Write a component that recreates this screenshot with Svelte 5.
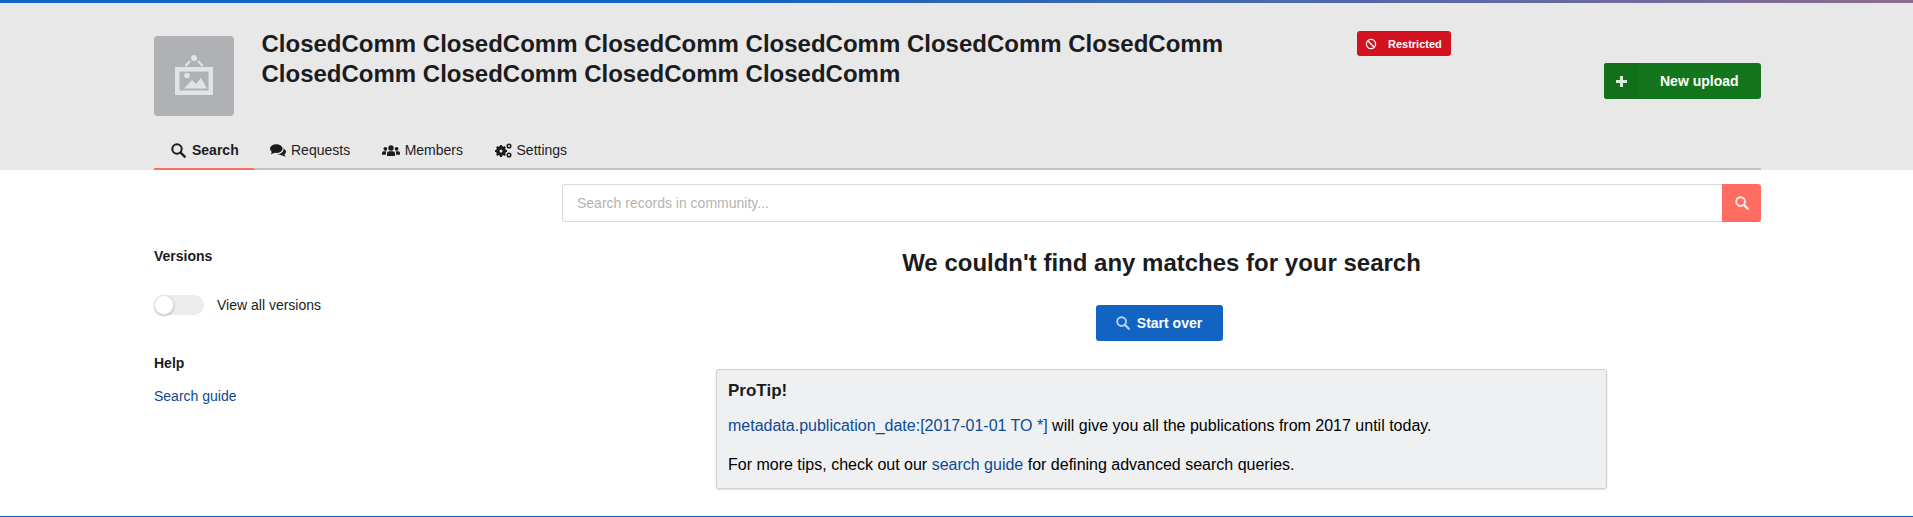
<script lang="ts">
  const tabs = [
    { label: 'Search', icon: 'search', active: true },
    { label: 'Requests', icon: 'comments', active: false },
    { label: 'Members', icon: 'users', active: false },
    { label: 'Settings', icon: 'cogs', active: false },
  ];
  const title = Array(10).fill('ClosedComm').join(' ');
</script>

{#snippet searchIcon(size)}
  <svg class="ico" width={size} height={size} viewBox="0 0 15 15" aria-hidden="true">
    <circle cx="6" cy="6" r="4.700" fill="none" stroke="currentColor" stroke-width="2" />
    <path d="M9.500 9.500 13.700 13.700" stroke="currentColor" stroke-width="2.400" stroke-linecap="round" />
  </svg>
{/snippet}

<div class="topline"></div>

<header class="head">
  <div class="wrap">
    <div class="head-row">
      <div class="logo">
        <svg width="38" height="40" viewBox="0 0 38 40" aria-hidden="true">
          <circle cx="19" cy="3" r="3" fill="#e2e3e4" />
          <path d="M10.500 11 15 6M27.500 11 23 6" stroke="#e2e3e4" stroke-width="2" />
          <path fill-rule="evenodd" d="M0 12H38V40H0ZM4.500 16.500V35.500H33.500V16.500Z" fill="#e2e3e4" />
          <circle cx="12" cy="20.500" r="2.800" fill="#e2e3e4" />
          <path d="M9 33.500 17 25 21 29 26 23 32 33.500Z" fill="#e2e3e4" />
        </svg>
      </div>
      <h1>{title}</h1>
      <span class="badge">
        <svg width="12" height="12" viewBox="0 0 12 12" aria-hidden="true">
          <circle cx="6" cy="6" r="4.600" fill="none" stroke="currentColor" stroke-width="1.300" />
          <path d="M2.800 2.800 9.200 9.200" stroke="currentColor" stroke-width="1.300" />
        </svg>
        Restricted
      </span>
      <button class="upload">
        <span class="plus">
          <svg width="13" height="13" viewBox="0 0 13 13" aria-hidden="true">
            <path d="M6.500 1V12M1 6.500H12" stroke="currentColor" stroke-width="3" />
          </svg>
        </span>
        <span class="upload-label">New upload</span>
      </button>
    </div>

    <nav class="tabs">
      {#each tabs as tab}
        <div class="tab" class:active={tab.active}>
          {#if tab.icon === 'search'}
            {@render searchIcon(15)}
          {:else if tab.icon === 'comments'}
            <svg class="ico" width="16" height="13" viewBox="0 0 16 13" aria-hidden="true">
              <ellipse cx="6.300" cy="4.600" rx="6.300" ry="4.400" fill="currentColor" />
              <path d="M2 7 1 10.500 6 8Z" fill="currentColor" />
              <path d="M13.600 4.500C15 5.300 16 6.300 16 7.800 16 8.900 15.300 9.800 14.500 10.400L15.500 12.800 11.500 11.200C10 11.200 8.500 10.800 7.500 10 11 10 13.800 8 13.600 4.500Z" fill="currentColor" />
            </svg>
          {:else if tab.icon === 'users'}
            <svg class="ico" width="18" height="13" viewBox="0 0 18 13" aria-hidden="true">
              <circle cx="9" cy="4" r="2.700" fill="currentColor" />
              <path d="M5 12V9.500C5 8 6.200 7.300 7.500 7.300H10.500C11.800 7.300 13 8 13 9.500V12Z" fill="currentColor" />
              <circle cx="3.400" cy="4.800" r="1.900" fill="currentColor" />
              <path d="M0 10.800V9C0 7.800 1 7.300 2 7.300H4.500C4 8 3.900 9 3.900 10.800Z" fill="currentColor" />
              <circle cx="14.600" cy="4.800" r="1.900" fill="currentColor" />
              <path d="M18 10.800V9C18 7.800 17 7.300 16 7.300H13.500C14 8 14.100 9 14.100 10.800Z" fill="currentColor" />
            </svg>
          {:else}
            <svg class="ico" width="17" height="15" viewBox="0 0 17 15" aria-hidden="true">
              <circle cx="6" cy="8" r="3.700" fill="none" stroke="currentColor" stroke-width="2.600" />
              <path d="M6 2V14M0 8H12M1.800 3.800 10.200 12.200M10.200 3.800 1.800 12.200" stroke="currentColor" stroke-width="2" />
              <circle cx="6" cy="8" r="1.500" fill="#e8e8e9" />
              <circle cx="14" cy="3" r="1.800" fill="none" stroke="currentColor" stroke-width="1.500" />
              <circle cx="14" cy="12" r="1.800" fill="none" stroke="currentColor" stroke-width="1.500" />
            </svg>
          {/if}
          <span>{tab.label}</span>
        </div>
      {/each}
    </nav>
  </div>
</header>

<main class="wrap body">
  <aside class="side">
    <h2 class="versions">Versions</h2>
    <label class="toggle-row">
      <span class="toggle"><span class="knob"></span></span>
      <span>View all versions</span>
    </label>
    <h2 class="help">Help</h2>
    <a href="#guide">Search guide</a>
  </aside>

  <section class="content">
    <form class="search" onsubmit={(e) => e.preventDefault()}>
      <input type="text" placeholder="Search records in community..." />
      <button class="search-btn" aria-label="Search">{@render searchIcon(14)}</button>
    </form>

    <div class="empty">
      <h3>We couldn't find any matches for your search</h3>
      <button class="start">{@render searchIcon(14)}<span>Start over</span></button>
      <div class="protip">
        <h4>ProTip!</h4>
        <p><a href="#query">metadata.publication_date:[2017-01-01 TO *]</a> will give you all the publications from 2017 until today.</p>
        <p>For more tips, check out our <a href="#guide">search guide</a> for defining advanced search queries.</p>
      </div>
    </div>
  </section>
</main>

<div class="bottomline"></div>

<style>
  :global(body) {
    margin: 0;
    background: #fff;
    font-family: "Liberation Sans", Arial, sans-serif;
    font-size: 14px;
    color: #1b1c1d;
    overflow: hidden;
  }

  a {
    color: #0c4a94;
    text-decoration: none;
  }

  .topline {
    height: 3px;
    background: linear-gradient(90deg, #1164c2 0%, #1164c2 38%, #8c6c8e 100%);
  }

  .wrap {
    width: 1607px;
    margin-left: 154px;
  }

  .head {
    background: #e8e8e9;
    height: 167px;
  }

  .head-row {
    display: flex;
    align-items: flex-start;
    height: 132px;
    padding-top: 33px;
    box-sizing: border-box;
  }

  .logo {
    width: 80px;
    height: 80px;
    flex: none;
    border-radius: 4px;
    background: #b0b1b4;
    display: flex;
    align-items: center;
    justify-content: center;
  }

  .logo svg {
    margin-top: -2px;
  }

  h1 {
    width: 1000px;
    flex: none;
    margin: -7px 0 0 27.500px;
    font-size: 24px;
    line-height: 30px;
    font-weight: 700;
  }

  .badge {
    flex: none;
    margin: -5px 0 0 95.500px;
    width: 94px;
    height: 25px;
    box-sizing: border-box;
    padding-left: 8px;
    display: flex;
    align-items: center;
    gap: 11px;
    border-radius: 3px;
    background: #d21121;
    color: #fff;
    font-size: 11px;
    font-weight: 700;
  }

  .upload {
    flex: none;
    margin: 30px 0 0 auto;
    position: relative;
    top: -3px;
    width: 157px;
    height: 36px;
    padding: 0;
    display: flex;
    overflow: hidden;
    border: 0;
    border-radius: 3px;
    background: #13761c;
    color: #fff;
    font: 700 14px "Liberation Sans", Arial, sans-serif;
  }

  .plus {
    width: 35px;
    height: 100%;
    display: flex;
    align-items: center;
    justify-content: center;
    background: #126f1a;
    color: #d9ebda;
  }

  .upload-label {
    flex: 1;
    align-self: center;
    padding-left: 21px;
    text-align: left;
  }

  .tabs {
    display: flex;
    height: 35px;
    box-sizing: border-box;
    border-bottom: 2px solid #c2c2c3;
  }

  .tab {
    display: flex;
    align-items: center;
    gap: 5px;
    height: 35px;
    box-sizing: border-box;
    padding: 0 15.500px 3px 16px;
    border-bottom: 2px solid transparent;
  }

  .tab.active {
    font-weight: 700;
    gap: 6px;
    border-bottom-color: #ff6c62;
    width: 100px;
    padding-left: 17px;
    padding-right: 0;
  }

  .body {
    display: flex;
    height: 346px;
  }

  .side {
    width: 408px;
    flex: none;
    padding-top: 78px;
    box-sizing: border-box;
  }

  h2 {
    margin: 0;
    font-size: 14px;
    line-height: 16px;
    font-weight: 700;
  }

  .toggle-row {
    display: flex;
    align-items: center;
    gap: 13px;
    margin-top: 31px;
    height: 20px;
  }

  .toggle {
    width: 50px;
    height: 20px;
    border-radius: 10px;
    background: #ececec;
    display: block;
  }

  .knob {
    display: block;
    width: 20px;
    height: 20px;
    border-radius: 50%;
    background: #fff;
    box-shadow: 0 1px 2px rgba(34, 36, 38, 0.3), inset 0 0 0 1px rgba(34, 36, 38, 0.12);
  }

  .help {
    margin-top: 40px;
    margin-bottom: 17px;
  }

  .content {
    flex: 1;
    padding-top: 14px;
  }

  .search {
    display: flex;
    height: 38px;
  }

  input {
    flex: 1;
    min-width: 0;
    box-sizing: border-box;
    border: 1px solid #d9d9da;
    border-right: 0;
    border-radius: 3px 0 0 3px;
    padding: 0 14px;
    font: 14px "Liberation Sans", Arial, sans-serif;
    outline: none;
  }

  input::placeholder {
    color: #b4b4b4;
    opacity: 1;
  }

  .search-btn {
    width: 39px;
    flex: none;
    padding: 0;
    border: 0;
    border-radius: 0 3px 3px 0;
    background: #ff6c62;
    color: #ffe9e7;
    display: flex;
    align-items: center;
    justify-content: center;
  }

  .empty {
    display: flex;
    flex-direction: column;
    align-items: center;
  }

  h3 {
    margin: 26px 0 0;
    font-size: 24px;
    line-height: 30px;
    font-weight: 700;
    color: #1b1c1d;
  }

  .start {
    margin: 27px 5px 0 0;
    width: 127px;
    height: 36px;
    border: 0;
    border-radius: 3px;
    background: #1164c2;
    color: #fff;
    font: 700 14px "Liberation Sans", Arial, sans-serif;
    display: flex;
    align-items: center;
    justify-content: center;
    gap: 7px;
  }

  .start .ico {
    color: #b8d3f0;
  }

  .protip {
    margin-top: 28px;
    width: 891px;
    height: 120px;
    box-sizing: border-box;
    padding: 11px 11px;
    border: 1px solid #cfd0d1;
    border-radius: 3px;
    background: #eff0f2;
    box-shadow: 0 1px 2px rgba(34, 36, 38, 0.15);
    font-size: 16px;
    line-height: 20px;
    color: #000;
  }

  h4 {
    margin: 0 0 15px;
    font-size: 17px;
    line-height: 20px;
    font-weight: 700;
    color: #1b1c1d;
  }

  p {
    margin: 0 0 19px;
  }

  .bottomline {
    position: absolute;
    left: 0;
    right: 0;
    top: 516px;
    height: 1px;
    background: #1164c2;
  }
</style>
